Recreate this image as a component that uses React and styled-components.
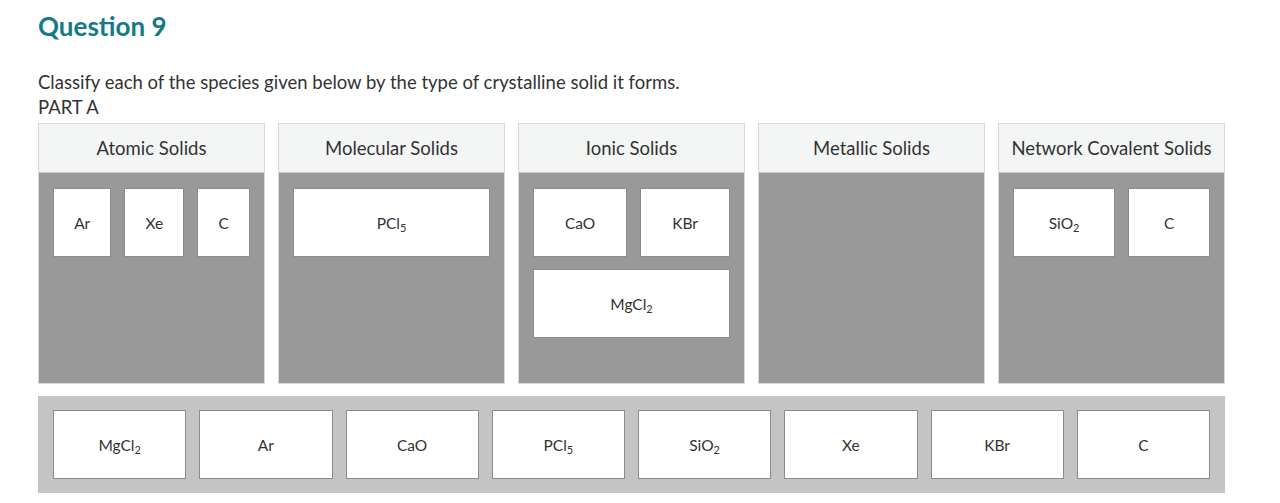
import React from "react";
import styled, { createGlobalStyle } from "styled-components";

const Global = createGlobalStyle`
  html, body { margin: 0; padding: 0; background: #ffffff; }
  body { font-family: Lato, "Open Sans", "Liberation Sans", sans-serif; color: #333333; }
`;

const Page = styled.div`
  padding: 11px 55px 0 38px;
`;

const Title = styled.h1`
  margin: 0;
  font-size: 26px;
  line-height: 30px;
  font-weight: 700;
  color: #167a86;
`;

const Prompt = styled.p`
  margin: 29px 0 0;
  font-size: 18.5px;
  line-height: 25px;
  color: #333333;
`;

const Columns = styled.div`
  display: grid;
  grid-template-columns: repeat(5, 1fr);
  gap: 13px;
  margin-top: 3px;
`;

const Column = styled.div`
  border: 1px solid #d3dbdb;
  display: flex;
  flex-direction: column;
`;

const Header = styled.div`
  height: 48px;
  background: #f4f5f5;
  border-bottom: 1px solid #c8cccc;
  display: flex;
  align-items: center;
  justify-content: center;
  font-size: 18.5px;
  color: #333333;
`;

const Body = styled.div`
  height: 210px;
  box-sizing: border-box;
  background: #999999;
  padding: 15px 14px;
  display: flex;
  flex-wrap: wrap;
  align-content: flex-start;
  gap: 12px 13px;
`;

const Tile = styled.div`
  box-sizing: border-box;
  height: 69px;
  background: #ffffff;
  border: 1px solid #8c8c8c;
  display: flex;
  align-items: center;
  justify-content: center;
  font-size: 15.5px;
  color: #333333;
  padding: 0 18px;
  flex: ${(p) => (p.$fixed ? "1 1 0" : "1 1 auto")};
  min-width: 0;

  sub {
    font-size: 11px;
    vertical-align: -3px;
    line-height: 0;
  }
`;

const Tray = styled.div`
  margin-top: 12px;
  background: #c4c4c4;
  padding: 14px 15px;
  display: flex;
  gap: 13px;
`;

const Formula = ({ f }) => {
  const parts = f.split(/(\d+)/).filter(Boolean);
  return (
    <span>
      {parts.map((p, i) => (/^\d+$/.test(p) ? <sub key={i}>{p}</sub> : <React.Fragment key={i}>{p}</React.Fragment>))}
    </span>
  );
};

const columns = [
  { name: "Atomic Solids", items: ["Ar", "Xe", "C"] },
  { name: "Molecular Solids", items: ["PCl5"] },
  { name: "Ionic Solids", items: ["CaO", "KBr", "MgCl2"] },
  { name: "Metallic Solids", items: [] },
  { name: "Network Covalent Solids", items: ["SiO2", "C"] },
];

const pool = ["MgCl2", "Ar", "CaO", "PCl5", "SiO2", "Xe", "KBr", "C"];

export default function App() {
  return (
    <Page>
      <Global />
      <Title>Question 9</Title>
      <Prompt>
        Classify each of the species given below by the type of crystalline solid it forms.
        <br />
        PART A
      </Prompt>
      <Columns>
        {columns.map((c) => (
          <Column key={c.name}>
            <Header>{c.name}</Header>
            <Body>
              {c.items.map((it, i) => (
                <Tile key={i}>
                  <Formula f={it} />
                </Tile>
              ))}
            </Body>
          </Column>
        ))}
      </Columns>
      <Tray>
        {pool.map((it, i) => (
          <Tile key={i} $fixed>
            <Formula f={it} />
          </Tile>
        ))}
      </Tray>
    </Page>
  );
}
